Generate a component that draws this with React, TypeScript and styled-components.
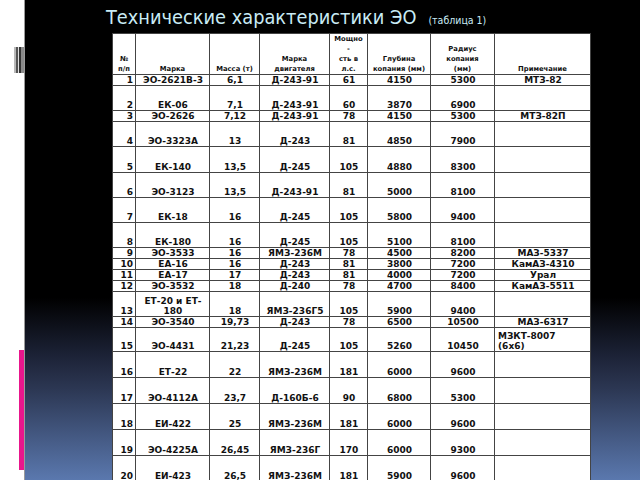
import React from "react";
import styled, { createGlobalStyle } from "styled-components";

const Global = createGlobalStyle`
  html, body {
    margin: 0;
    padding: 0;
    width: 640px;
    height: 480px;
    overflow: hidden;
    background: #000;
  }
`;

const Page = styled.div`
  display: flex;
  width: 640px;
  height: 480px;
  overflow: hidden;
`;

const LeftStrip = styled.div`
  width: 25px;
  flex: none;
  background: #fff;
  border-right: 1px solid #9a9a9a;
  display: flex;
  flex-direction: column;
  align-items: flex-end;
  padding-top: 47px;
  box-sizing: border-box;
`;

const MagentaBar = styled.div`
  margin-top: auto;
  margin-bottom: 10px;
  width: 5px;
  height: 120px;
  background: #e8168c;
`;

const Main = styled.div`
  flex: 1;
  display: flex;
  flex-direction: column;
  background: linear-gradient(to bottom, #000 0%, #000 62%, #1c2236 74%, #2c3753 81%, #5a78ae 100%);
`;

const TitleRow = styled.div`
  flex: none;
  display: flex;
  align-items: baseline;
  gap: 12px;
  height: 33px;
  padding-left: 81px;
  padding-top: 6px;
  box-sizing: border-box;
  color: #c9ebf5;
  font-family: "DejaVu Sans Condensed", "DejaVu Sans", sans-serif;
  font-stretch: condensed;
`;

const Title = styled.span`
  font-size: 19.8px;
`;

const Sub = styled.span`
  font-size: 10.5px;
`;

const Table = styled.table`
  flex: none;
  margin-left: 87px;
  width: 478px;
  table-layout: fixed;
  border-collapse: collapse;
  background: #fff;
  color: #111;
  font-family: "DejaVu Sans", sans-serif;
  font-weight: bold;
`;

const Head = styled.th`
  border: 1px solid #444;
  font-size: 6.8px;
  line-height: 10px;
  font-weight: bold;
  vertical-align: bottom;
  text-align: center;
  padding: 0 1px;
  white-space: nowrap;
`;

const Cell = styled.td<{ $align?: string }>`
  border: 1px solid #444;
  font-size: 9px;
  line-height: 10px;
  vertical-align: bottom;
  text-align: ${(p) => p.$align || "center"};
  padding: 0 2px 0 3px;
  overflow: hidden;
  white-space: pre-line;
`;

const Row = styled.tr<{ $h: number }>`
  height: ${(p) => p.$h}px;
`;

const StripeIcon = () => (
  <svg width="10" height="26" viewBox="0 0 10 26">
    <rect x="0" y="0" width="2" height="26" fill="#b8b8b8" />
    <rect x="2" y="0" width="2" height="26" fill="#555" />
    <rect x="4" y="0" width="1" height="26" fill="#e0e0e0" />
    <rect x="5" y="0" width="2" height="26" fill="#333" />
    <rect x="7" y="0" width="3" height="26" fill="#8a8a8a" />
  </svg>
);

type Item = [number, string, string, string, string, string, string, string, number];

const rows: Item[] = [
  [1, "ЭО-2621В-3", "6,1", "Д-243-91", "61", "4150", "5300", "МТЗ-82", 10],
  [2, "ЕК-06", "7,1", "Д-243-91", "60", "3870", "6900", "", 25],
  [3, "ЭО-2626", "7,12", "Д-243-91", "78", "4150", "5300", "МТЗ-82П", 10],
  [4, "ЭО-3323А", "13", "Д-243", "81", "4850", "7900", "", 25],
  [5, "ЕК-140", "13,5", "Д-245", "105", "4880", "8300", "", 26],
  [6, "ЭО-3123", "13,5", "Д-243-91", "81", "5000", "8100", "", 25],
  [7, "ЕК-18", "16", "Д-245", "105", "5800", "9400", "", 25],
  [8, "ЕК-180", "16", "Д-245", "105", "5100", "8100", "", 25],
  [9, "ЭО-3533", "16", "ЯМЗ-236М", "78", "4500", "8200", "МАЗ-5337", 11],
  [10, "ЕА-16", "16", "Д-243", "81", "3800", "7200", "КамАЗ-4310", 11],
  [11, "ЕА-17", "17", "Д-243", "81", "4000", "7200", "Урал", 11],
  [12, "ЭО-3532", "18", "Д-240", "78", "4700", "8400", "КамАЗ-5511", 11],
  [13, "ЕТ-20 и ЕТ-\n180", "18", "ЯМЗ-236Г5", "105", "5900", "9400", "", 25],
  [14, "ЭО-3540", "19,73", "Д-243", "78", "6500", "10500", "МАЗ-6317", 11],
  [15, "ЭО-4431", "21,23", "Д-245", "105", "5260", "10450", "МЗКТ-8007\n(6х6)", 24],
  [16, "ЕТ-22", "22", "ЯМЗ-236М", "181", "6000", "9600", "", 26],
  [17, "ЭО-4112А", "23,7", "Д-160Б-6", "90", "6800", "5300", "", 26],
  [18, "ЕИ-422", "25", "ЯМЗ-236М", "181", "6000", "9600", "", 26],
  [19, "ЭО-4225А", "26,45", "ЯМЗ-236Г", "170", "6000", "9300", "", 26],
  [20, "ЕИ-423", "26,5", "ЯМЗ-236М", "181", "5900", "9600", "", 26],
];

export default function App() {
  return (
    <Page>
      <Global />
      <LeftStrip>
        <StripeIcon />
        <MagentaBar />
      </LeftStrip>
      <Main>
        <TitleRow>
          <Title>Технические характеристики ЭО</Title>
          <Sub>(таблица 1)</Sub>
        </TitleRow>
        <Table>
          <colgroup>
            <col style={{ width: 23 }} />
            <col style={{ width: 74 }} />
            <col style={{ width: 50 }} />
            <col style={{ width: 70 }} />
            <col style={{ width: 38 }} />
            <col style={{ width: 63 }} />
            <col style={{ width: 64 }} />
            <col style={{ width: 96 }} />
          </colgroup>
          <thead>
            <Row $h={37}>
              <Head>№<br />п/п</Head>
              <Head>Марка</Head>
              <Head>Масса (т)</Head>
              <Head>Марка<br />двигателя</Head>
              <Head>Мощно<br />-<br />сть в<br />л.с.</Head>
              <Head>Глубина<br />копания (мм)</Head>
              <Head>Радиус<br />копания<br />(мм)</Head>
              <Head>Примечание</Head>
            </Row>
          </thead>
          <tbody>
            {rows.map((r) => (
              <Row key={r[0]} $h={r[8]}>
                <Cell $align="right">{r[0]}</Cell>
                <Cell>{r[1]}</Cell>
                <Cell>{r[2]}</Cell>
                <Cell>{r[3]}</Cell>
                <Cell>{r[4]}</Cell>
                <Cell>{r[5]}</Cell>
                <Cell>{r[6]}</Cell>
                <Cell $align={r[7].includes("(") ? "left" : "center"}>{r[7]}</Cell>
              </Row>
            ))}
          </tbody>
        </Table>
      </Main>
    </Page>
  );
}
